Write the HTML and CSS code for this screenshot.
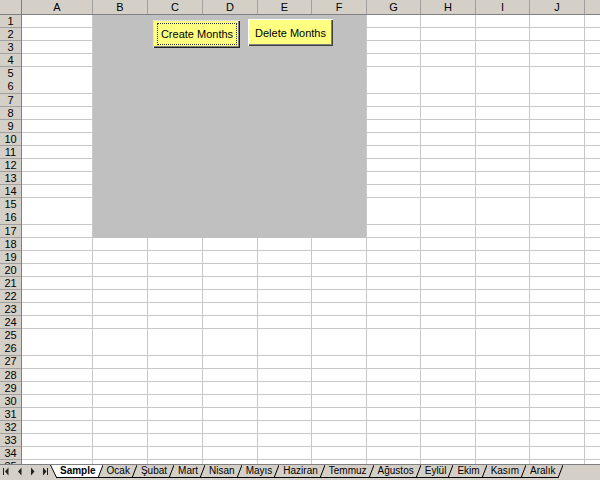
FILE: index.html
```html
<!DOCTYPE html>
<html>
<head>
<meta charset="utf-8">
<title>Sheet</title>
<link rel="stylesheet" href="styles.css">
</head>
<body>
<div class="window">
  <div class="sheet">
    <div class="colhead">
      <div class="corner"></div>
      <div class="ch w71">A</div>
      <div class="ch w55">B</div>
      <div class="ch w55">C</div>
      <div class="ch w55">D</div>
      <div class="ch w54">E</div>
      <div class="ch w55">F</div>
      <div class="ch w54">G</div>
      <div class="ch w55">H</div>
      <div class="ch w54">I</div>
      <div class="ch w55">J</div>
      <div class="ch w55"></div>
    </div>
    <div class="body">
      <div class="rowhead">
        <div class="rh">1</div><div class="rh">2</div><div class="rh">3</div><div class="rh">4</div><div class="rh">5</div>
        <div class="rh">6</div><div class="rh">7</div><div class="rh">8</div><div class="rh">9</div><div class="rh">10</div>
        <div class="rh">11</div><div class="rh">12</div><div class="rh">13</div><div class="rh">14</div><div class="rh">15</div>
        <div class="rh">16</div><div class="rh">17</div><div class="rh">18</div><div class="rh">19</div><div class="rh">20</div>
        <div class="rh">21</div><div class="rh">22</div><div class="rh">23</div><div class="rh">24</div><div class="rh">25</div>
        <div class="rh">26</div><div class="rh">27</div><div class="rh">28</div><div class="rh">29</div><div class="rh">30</div>
        <div class="rh">31</div><div class="rh">32</div><div class="rh">33</div><div class="rh">34</div><div class="rh">35</div>
      </div>
      <div class="cells">
        <div class="col w71"></div>
        <div class="col w55"></div>
        <div class="col w55"></div>
        <div class="col w55"></div>
        <div class="col w54"></div>
        <div class="col w55"></div>
        <div class="col w54"></div>
        <div class="col w55"></div>
        <div class="col w54"></div>
        <div class="col w55"></div>
        <div class="col w55"></div>
      </div>
    </div>
    <div class="shape"></div>
    <button class="btn create"><span class="focus">Create Months</span></button>
    <button class="btn delete">Delete Months</button>
  </div>
  <div class="tabbar">
    <svg class="nav" width="50" height="13" viewBox="0 0 50 13">
      <rect x="3" y="3" width="1" height="7" fill="#222"/>
      <polygon points="8.5,2.5 5,6.5 8.5,10.5" fill="#222"/>
      <polygon points="21.5,2.5 18,6.5 21.5,10.5" fill="#222"/>
      <polygon points="31,2.5 34.5,6.5 31,10.5" fill="#222"/>
      <polygon points="43,2.5 46.5,6.5 43,10.5" fill="#222"/>
      <rect x="47" y="3" width="1" height="7" fill="#222"/>
    </svg>
    <div class="tabs">
      <svg class="edge" width="8" height="13" viewBox="0 0 8 13">
        <polygon points="0,0 8,0 8,13 6.5,13" fill="#fff"/>
        <line x1="0.5" y1="0" x2="6.5" y2="12.5" stroke="#000" stroke-width="1"/>
        <line x1="6" y1="12.5" x2="8" y2="12.5" stroke="#000" stroke-width="1"/>
      </svg>
      <span class="tab active">Sample</span>
      <svg class="sep" width="5" height="13" viewBox="0 0 5 13">
        <polygon points="0,0 5,0 0,13" fill="#fff"/>
        <line x1="0" y1="13" x2="5" y2="0" stroke="#000" stroke-width="1"/>
        <line x1="0" y1="12.5" x2="5" y2="12.5" stroke="#000" stroke-width="1"/>
      </svg>
      <span class="tab">Ocak</span>
      <svg class="sep" width="5" height="13" viewBox="0 0 5 13"><line x1="0" y1="13" x2="5" y2="0" stroke="#000"/><line x1="0" y1="12.5" x2="5" y2="12.5" stroke="#000"/></svg>
      <span class="tab">Şubat</span>
      <svg class="sep" width="5" height="13" viewBox="0 0 5 13"><line x1="0" y1="13" x2="5" y2="0" stroke="#000"/><line x1="0" y1="12.5" x2="5" y2="12.5" stroke="#000"/></svg>
      <span class="tab">Mart</span>
      <svg class="sep" width="5" height="13" viewBox="0 0 5 13"><line x1="0" y1="13" x2="5" y2="0" stroke="#000"/><line x1="0" y1="12.5" x2="5" y2="12.5" stroke="#000"/></svg>
      <span class="tab">Nisan</span>
      <svg class="sep" width="5" height="13" viewBox="0 0 5 13"><line x1="0" y1="13" x2="5" y2="0" stroke="#000"/><line x1="0" y1="12.5" x2="5" y2="12.5" stroke="#000"/></svg>
      <span class="tab">Mayıs</span>
      <svg class="sep" width="5" height="13" viewBox="0 0 5 13"><line x1="0" y1="13" x2="5" y2="0" stroke="#000"/><line x1="0" y1="12.5" x2="5" y2="12.5" stroke="#000"/></svg>
      <span class="tab">Haziran</span>
      <svg class="sep" width="5" height="13" viewBox="0 0 5 13"><line x1="0" y1="13" x2="5" y2="0" stroke="#000"/><line x1="0" y1="12.5" x2="5" y2="12.5" stroke="#000"/></svg>
      <span class="tab">Temmuz</span>
      <svg class="sep" width="5" height="13" viewBox="0 0 5 13"><line x1="0" y1="13" x2="5" y2="0" stroke="#000"/><line x1="0" y1="12.5" x2="5" y2="12.5" stroke="#000"/></svg>
      <span class="tab">Ağustos</span>
      <svg class="sep" width="5" height="13" viewBox="0 0 5 13"><line x1="0" y1="13" x2="5" y2="0" stroke="#000"/><line x1="0" y1="12.5" x2="5" y2="12.5" stroke="#000"/></svg>
      <span class="tab">Eylül</span>
      <svg class="sep" width="5" height="13" viewBox="0 0 5 13"><line x1="0" y1="13" x2="5" y2="0" stroke="#000"/><line x1="0" y1="12.5" x2="5" y2="12.5" stroke="#000"/></svg>
      <span class="tab">Ekim</span>
      <svg class="sep" width="5" height="13" viewBox="0 0 5 13"><line x1="0" y1="13" x2="5" y2="0" stroke="#000"/><line x1="0" y1="12.5" x2="5" y2="12.5" stroke="#000"/></svg>
      <span class="tab">Kasım</span>
      <svg class="sep" width="5" height="13" viewBox="0 0 5 13"><line x1="0" y1="13" x2="5" y2="0" stroke="#000"/><line x1="0" y1="12.5" x2="5" y2="12.5" stroke="#000"/></svg>
      <span class="tab">Aralık</span>
      <svg class="sep" width="5" height="13" viewBox="0 0 5 13"><line x1="0" y1="13" x2="5" y2="0" stroke="#000"/></svg>
    </div>
  </div>
</div>
</body>
</html>
```

FILE: styles.css
```css
html, body {
  margin: 0;
  padding: 0;
}
body {
  width: 600px;
  height: 480px;
  overflow: hidden;
  font-family: "Liberation Sans", Arial, sans-serif;
  color: #000;
  background: #d4d0c8;
}
.window {
  display: flex;
  flex-direction: column;
  width: 600px;
  height: 480px;
  overflow: hidden;
}
.sheet {
  position: relative;
  flex: none;
  height: 464px;
  overflow: hidden;
  background: #fff;
}
.colhead {
  display: flex;
  height: 15px;
  box-sizing: border-box;
  background: #d4d0c8;
  border-bottom: 1px solid #808080;
}
.corner {
  flex: none;
  width: 22px;
  box-sizing: border-box;
  border-right: 1px solid #808080;
}
.ch {
  flex: none;
  box-sizing: border-box;
  border-right: 1px solid #a0a0a0;
  text-align: center;
  font-size: 11px;
  line-height: 14px;
}
.w71 { width: 71px; }
.w55 { width: 55px; }
.w54 { width: 54px; }
.body {
  display: flex;
}
.rowhead {
  flex: none;
  width: 22px;
  box-sizing: border-box;
  border-right: 1px solid #808080;
  background: repeating-linear-gradient(to bottom, #d4d0c8 0, #d4d0c8 12.1px, #a0a0a0 12.1px, #a0a0a0 13.1px);
}
.rh {
  height: 13.1px;
  font-size: 11px;
  line-height: 13px;
  text-align: center;
}
.cells {
  display: flex;
  flex: 1;
  background: repeating-linear-gradient(to bottom, #fff 0, #fff 12.1px, #c8c8c8 12.1px, #c8c8c8 13.1px);
}
.col {
  flex: none;
  height: 458.5px;
  box-sizing: border-box;
  border-right: 1px solid #c8c8c8;
}
.shape {
  position: absolute;
  left: 93px;
  top: 15px;
  width: 273px;
  height: 223px;
  background: #c0c0c0;
}
.btn {
  position: absolute;
  display: flex;
  align-items: center;
  justify-content: center;
  margin: 0;
  padding: 0;
  border: none;
  background: #ffff80;
  color: #000;
  font-family: "Liberation Sans", Arial, sans-serif;
  font-size: 11px;
  box-shadow: inset 1px 1px #ffffff, inset -1px -1px #404040, inset -2px -2px #808080;
}
.create {
  left: 153px;
  top: 20px;
  width: 87px;
  height: 28px;
  box-shadow: inset 1px 1px #e0e0e0, inset -1px -1px #202020, inset -2px -2px #808080;
}
.create .focus {
  flex: 1;
  align-self: stretch;
  display: flex;
  align-items: center;
  justify-content: center;
  margin: 3px 3px 3px 4px;
  border: 1px dotted #333;
}
.delete {
  left: 248px;
  top: 19px;
  width: 85px;
  height: 27px;
}
.tabbar {
  flex: none;
  display: flex;
  height: 16px;
  box-sizing: border-box;
  border-top: 1px solid #808080;
  background: #d4d0c8;
}
.nav {
  display: block;
  flex: none;
}
.tabs {
  display: flex;
  align-items: flex-start;
}
.tabs svg {
  display: block;
  flex: none;
}
.tab {
  height: 13px;
  box-sizing: border-box;
  border-bottom: 1px solid #000;
  padding: 0 2px 0 4px;
  font-size: 10px;
  line-height: 12px;
  white-space: nowrap;
}
.tab.active {
  background: #fff;
  font-weight: bold;
  padding: 0 2px;
}
```
